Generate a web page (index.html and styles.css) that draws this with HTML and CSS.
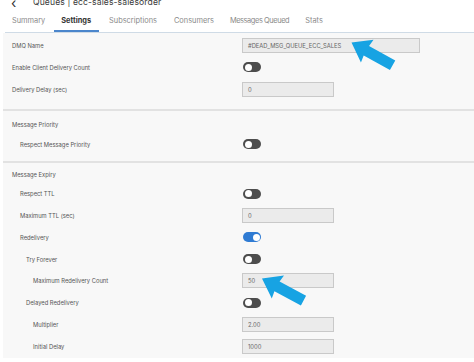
FILE: index.html
```html
<!DOCTYPE html>
<html>
<head>
<meta charset="utf-8">
<link rel="stylesheet" href="styles.css">
</head>
<body>
<div class="page">
  <div class="header">
    <span class="back">&#8249;</span>
    <span class="title">Queues | ecc-sales-salesorder</span>
  </div>
  <div class="tabs">
    <span class="tab">Summary</span>
    <span class="tab active">Settings</span>
    <span class="tab">Subscriptions</span>
    <span class="tab">Consumers</span>
    <span class="tab mq">Messages Queued</span>
    <span class="tab">Stats</span>
  </div>
  <div class="panel">
    <div class="section s1">
      <div class="row"><div class="label l0">DMQ Name</div><div class="ctrl"><div class="input wide">#DEAD_MSG_QUEUE_ECC_SALES</div></div></div>
      <div class="row"><div class="label l0">Enable Client Delivery Count</div><div class="ctrl"><span class="toggle"></span></div></div>
      <div class="row"><div class="label l0">Delivery Delay (sec)</div><div class="ctrl"><div class="input">0</div></div></div>
    </div>
    <div class="section s2">
      <div class="stitle">Message Priority</div>
      <div class="row"><div class="label l1">Respect Message Priority</div><div class="ctrl"><span class="toggle"></span></div></div>
    </div>
    <div class="section s3">
      <div class="stitle">Message Expiry</div>
      <div class="row"><div class="label l1">Respect TTL</div><div class="ctrl"><span class="toggle"></span></div></div>
      <div class="row"><div class="label l1">Maximum TTL (sec)</div><div class="ctrl"><div class="input">0</div></div></div>
      <div class="row"><div class="label l1">Redelivery</div><div class="ctrl"><span class="toggle on"></span></div></div>
      <div class="row"><div class="label l2">Try Forever</div><div class="ctrl"><span class="toggle"></span></div></div>
      <div class="row"><div class="label l3">Maximum Redelivery Count</div><div class="ctrl"><div class="input">50</div></div></div>
      <div class="row"><div class="label l2">Delayed Redelivery</div><div class="ctrl"><span class="toggle"></span></div></div>
      <div class="row"><div class="label l3">Multiplier</div><div class="ctrl"><div class="input">2.00</div></div></div>
      <div class="row"><div class="label l3">Initial Delay</div><div class="ctrl"><div class="input">1000</div></div></div>
    </div>
  </div>
  <svg class="arrows" width="474" height="362" viewBox="0 0 474 362">
    <g transform="translate(351.5 46.5) rotate(29)">
      <polygon points="0,0 18,-13 17,-5.5 47,-5.5 47,5.5 17,5.5 18,13"/>
    </g>
    <g transform="translate(262 282.5) rotate(28)">
      <polygon points="0,0 18,-13 17,-5.5 47,-5.5 47,5.5 17,5.5 18,13"/>
    </g>
  </svg>
</div>
</body>
</html>
```
FILE: styles.css
```css
html, body {
  margin: 0;
  padding: 0;
  background: #ffffff;
}
body {
  font-family: Inter, "Open Sans", sans-serif;
  color: #555;
  width: 474px;
  height: 362px;
  overflow: hidden;
}
.page {
  position: relative;
  width: 474px;
  height: 362px;
}
.header {
  display: flex;
  align-items: flex-start;
  height: 16px;
  margin-top: -4px;
  padding-left: 11px;
}
.back {
  font-size: 14px;
  line-height: 13px;
  color: #333;
  width: 22px;
}
.title {
  font-size: 8.6px;
  line-height: 12px;
  color: #3a3a3a;
  letter-spacing: 0.1px;
}
.tabs {
  display: flex;
  height: 20px;
  margin-left: 5px;
  border-bottom: 1px solid #cfdbe6;
}
.tab {
  font-size: 7.4px;
  color: #8a8a8a;
  line-height: 18px;
  padding: 0 8px;
  margin-right: 1px;
  border-bottom: 2px solid transparent;
}
.tab:first-child { padding-left: 7px; }
.tab:nth-child(2) { padding-left: 7px; padding-right: 8px; }
.tab:nth-child(3) { padding-left: 9px; }
.tab:nth-child(4) { padding-left: 8px; }
.tab:nth-child(5) { padding-left: 7px; }
.tab:nth-child(6) { padding-left: 7px; }
.tab.mq { letter-spacing: -0.4px; }
.tab.active {
  color: #333;
  font-weight: 700;
  border-bottom-color: #4b86cc;
}
.panel {
  margin-left: 3px;
  background: #f8f8f8;
  height: 325px;
  overflow: hidden;
}
.section {
  border-bottom: 2px solid #e2e2e2;
}
.s1 { padding-top: 1px; padding-bottom: 9px; }
.s2 { padding-top: 5px; padding-bottom: 6px; }
.s3 { padding-top: 3px; border-bottom: none; }
.stitle {
  font-size: 5.8px;
  line-height: 17px;
  padding-left: 9px;
  color: #555;
}
.row {
  display: grid;
  grid-template-columns: 239px 1fr;
  height: 22px;
  align-items: center;
}
.s3 .row { height: 21.75px; }
.label {
  font-size: 5.8px;
  color: #555;
}
.l0 { padding-left: 9px; }
.l1 { padding-left: 17px; }
.l2 { padding-left: 23px; }
.l3 { padding-left: 30px; }
.ctrl {
  display: flex;
  align-items: center;
}
.input {
  box-sizing: border-box;
  width: 92px;
  height: 15px;
  background: #ebebeb;
  border: 1px solid #c9c9c9;
  font-size: 5.8px;
  line-height: 13px;
  padding-left: 5px;
  color: #666;
}
.input.wide { width: 178px; }
.toggle {
  position: relative;
  display: inline-block;
  width: 18px;
  height: 10px;
  border-radius: 5px;
  background: #4d4d4d;
  margin-left: 1px;
}
.toggle::after {
  content: "";
  position: absolute;
  left: 1.5px;
  top: 1.5px;
  width: 7px;
  height: 7px;
  border-radius: 50%;
  background: #fff;
}
.toggle.on { background: #2f7bd3; }
.toggle.on::after { left: 9.5px; }
.arrows {
  position: absolute;
  left: 0;
  top: 0;
  pointer-events: none;
}
.arrows polygon { fill: #17a3e3; }
```
